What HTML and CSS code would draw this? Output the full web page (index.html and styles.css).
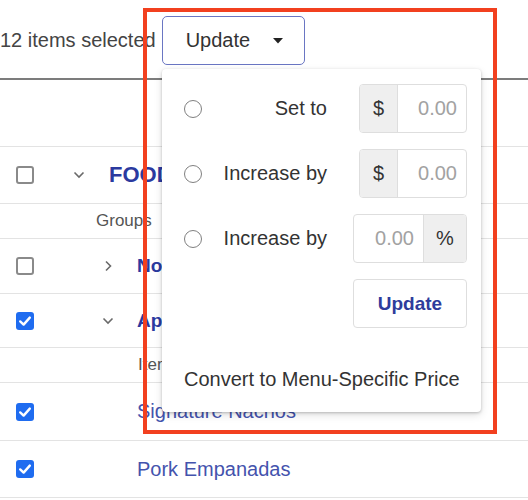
FILE: index.html
```html
<!DOCTYPE html>
<html>
<head>
<meta charset="utf-8">
<link rel="stylesheet" href="styles.css">
</head>
<body>
<div class="page">
  <div class="toolbar">
    <span class="count">12 items selected</span>
    <button class="menu-btn">Update<svg class="caret" width="10" height="6" viewBox="0 0 10 6"><path d="M0 0 H10 L5 5.5 Z" fill="#222"/></svg></button>
  </div>

  <div class="table">
    <div class="row head"></div>
    <div class="row food">
      <span class="cb"></span>
      <svg class="chev lvl1" width="12" height="8" viewBox="0 0 12 8"><path d="M1.5 1.5 L6 6 L10.5 1.5" fill="none" stroke="#6a6a6a" stroke-width="1.6"/></svg>
      <span class="name n1">FOOD</span>
    </div>
    <div class="row sub groups"><span>Groups</span></div>
    <div class="row grp-no">
      <span class="cb"></span>
      <svg class="chev lvl2" width="12" height="12" viewBox="0 0 12 12"><path d="M4 1.5 L8.5 6 L4 10.5" fill="none" stroke="#6a6a6a" stroke-width="1.6"/></svg>
      <span class="name n2">Nonalcoholic Drinks</span>
    </div>
    <div class="row grp-ap">
      <span class="cb on"><svg width="18" height="18" viewBox="0 0 18 18"><path d="M4.2 9.4 L7.6 12.6 L13.8 5.6" fill="none" stroke="#fff" stroke-width="2.4" stroke-linecap="round" stroke-linejoin="round"/></svg></span>
      <svg class="chev lvl2" width="12" height="8" viewBox="0 0 12 8"><path d="M1.5 1.5 L6 6 L10.5 1.5" fill="none" stroke="#6a6a6a" stroke-width="1.6"/></svg>
      <span class="name n2">Appetizers</span>
    </div>
    <div class="row sub items"><span>Items</span></div>
    <div class="row item sig">
      <span class="cb on"><svg width="18" height="18" viewBox="0 0 18 18"><path d="M4.2 9.4 L7.6 12.6 L13.8 5.6" fill="none" stroke="#fff" stroke-width="2.4" stroke-linecap="round" stroke-linejoin="round"/></svg></span>
      <span class="name n3">Signature Nachos</span>
    </div>
    <div class="row item pork">
      <span class="cb on"><svg width="18" height="18" viewBox="0 0 18 18"><path d="M4.2 9.4 L7.6 12.6 L13.8 5.6" fill="none" stroke="#fff" stroke-width="2.4" stroke-linecap="round" stroke-linejoin="round"/></svg></span>
      <span class="name n3">Pork Empanadas</span>
    </div>
  </div>

  <div class="panel">
    <div class="opts">
      <span class="radio"></span>
      <span class="label">Set to</span>
      <div class="grp"><span class="addon">$</span><span class="val">0.00</span></div>

      <span class="radio"></span>
      <span class="label">Increase by</span>
      <div class="grp"><span class="addon">$</span><span class="val">0.00</span></div>

      <span class="radio"></span>
      <span class="label">Increase by</span>
      <div class="grp wide"><span class="val">0.00</span><span class="addon pct">%</span></div>

      <button class="apply">Update</button>
    </div>
    <div class="convert">Convert to Menu-Specific Price</div>
  </div>

  <div class="annot"></div>
</div>
</body>
</html>
```

FILE: styles.css
```css
* { box-sizing: border-box; }

body {
  margin: 0;
  font-family: "Liberation Sans", Arial, sans-serif;
  color: #333;
  background: #fff;
}

.page {
  position: relative;
  width: 528px;
  height: 500px;
  overflow: hidden;
}

.toolbar {
  height: 78px;
  padding-top: 16px;
  display: flex;
  align-items: flex-start;
  gap: 6px;
}

.count {
  font-size: 20px;
  line-height: 49px;
  color: #444;
  white-space: nowrap;
}

.menu-btn {
  height: 49px;
  width: 143px;
  border: 1.5px solid #6a76c3;
  border-radius: 5px;
  background: #fff;
  display: flex;
  align-items: center;
  padding: 0 0 0 23px;
  font-family: inherit;
  font-size: 20px;
  color: #333;
}

.caret { margin-left: 23px; }

.table { border-top: 2px solid #7c7c7c; }

.row {
  display: flex;
  align-items: center;
  border-bottom: 1px solid #e3e3e3;
}

.head { height: 67px; }
.food { height: 57px; }
.groups { height: 35px; }
.grp-no { height: 55px; }
.grp-ap { height: 54px; }
.items { height: 35px; }
.sig { height: 58px; }
.pork { height: 57px; }

.cb {
  width: 18px;
  height: 18px;
  margin-left: 16px;
  border: 2px solid #8a8a8a;
  border-radius: 3px;
  flex: none;
  background: #fff;
}

.cb.on {
  border: none;
  background: #1f6cf0;
  display: flex;
}

.chev { flex: none; }
.chev.lvl1 { margin-left: 39px; }
.chev.lvl2 { margin-left: 68px; }

.name {
  white-space: nowrap;
  color: #2b3a9f;
}
.n1 { margin-left: 24px; font-size: 22px; font-weight: bold; }
.n2 { margin-left: 23px; font-size: 19px; font-weight: bold; }
.n3 { margin-left: 103px; font-size: 20px; color: #4453ad; }

.sub {
  font-size: 17px;
  color: #555;
}
.groups { padding-left: 96px; }
.items { padding-left: 138px; }

.panel {
  position: absolute;
  left: 162px;
  top: 69px;
  width: 319px;
  height: 343px;
  background: #fff;
  border-radius: 4px;
  box-shadow: 0 1px 3px rgba(0, 0, 0, 0.22), 0 3px 8px rgba(0, 0, 0, 0.12);
  padding: 15px 14px 0 22px;
}

.opts {
  display: grid;
  grid-template-columns: 18px minmax(0, 1fr) 114px;
  column-gap: 25px;
  row-gap: 16px;
  align-items: center;
}

.radio {
  width: 18px;
  height: 18px;
  border: 1.5px solid #808080;
  border-radius: 50%;
}

.label {
  font-size: 20px;
  text-align: right;
  white-space: nowrap;
  color: #333;
  display: flex;
  justify-content: flex-end;
  margin-right: 1px;
}

.grp {
  justify-self: end;
  width: 108px;
  height: 49px;
  display: flex;
  border: 1px solid #dedede;
  border-radius: 4px;
  overflow: hidden;
  font-size: 20px;
}
.grp.wide { width: 114px; }

.addon {
  width: 38px;
  flex: none;
  background: #efefef;
  border-right: 1px solid #dedede;
  display: flex;
  align-items: center;
  justify-content: center;
  color: #333;
}
.addon.pct {
  width: 43px;
  border-right: none;
  border-left: 1px solid #dedede;
}

.val {
  flex: 1;
  display: flex;
  align-items: center;
  justify-content: flex-end;
  padding-right: 9px;
  color: #a2a2a2;
}

.apply {
  grid-column: 3;
  height: 49px;
  width: 114px;
  border: 1px solid #dedede;
  border-radius: 4px;
  background: #fff;
  font-family: inherit;
  font-size: 19px;
  font-weight: bold;
  color: #2e3c9c;
}

.convert {
  margin-top: 39px;
  font-size: 20px;
  line-height: 24px;
  color: #333;
  white-space: nowrap;
}

.annot {
  position: absolute;
  left: 143px;
  top: 8px;
  width: 354px;
  height: 426px;
  border: 4px solid #f2401f;
  pointer-events: none;
}
```
